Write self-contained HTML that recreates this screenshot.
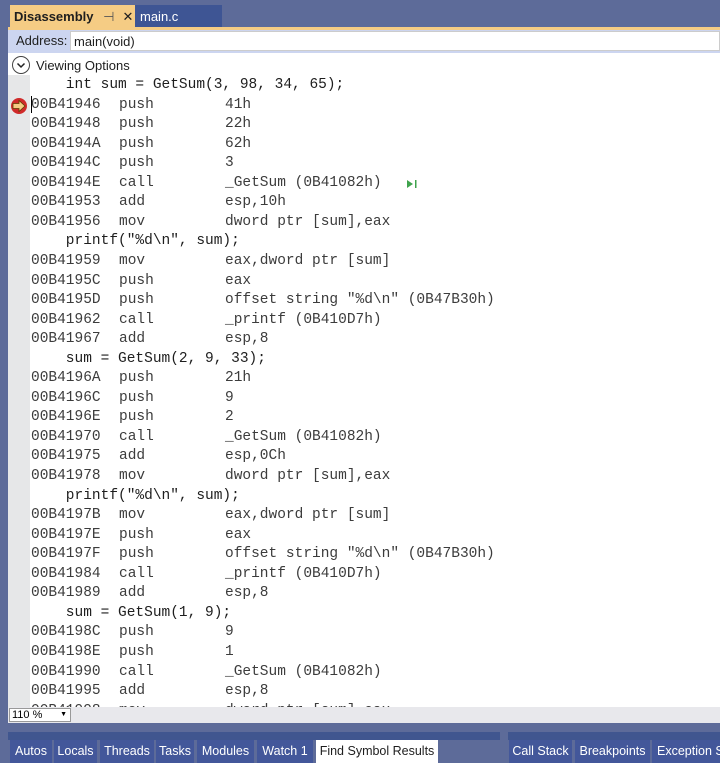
<!DOCTYPE html>
<html><head><meta charset="utf-8"><style>
*{margin:0;padding:0;box-sizing:border-box}
body{width:720px;height:763px;overflow:hidden;background:#5d6b99;font-family:"Liberation Sans",sans-serif;position:relative}
.abs{position:absolute}
.tab1{left:10px;top:5px;width:125px;height:22px;background:#f5cc84;font-weight:bold;font-size:13px;color:#1e1e1e;padding:4px 0 0 4px;white-space:nowrap}
.tab2{left:135px;top:5px;width:87px;height:22px;background:#3e5594;font-size:13px;color:#fff;padding:4px 0 0 5px}
.addrin{left:8px;top:27px;width:712px;height:26px;background:#ccd5f0;border-top:3px solid #f5cc84}
.box{left:70px;top:31px;width:650px;height:20px;background:#fff;border:1px solid #ccc;font-size:13px;padding:2px 0 0 3px;color:#1e1e1e}
.content{left:8px;top:53px;width:712px;height:654px;background:#fff;overflow:hidden}
.gut{left:8px;top:75px;width:22px;height:632px;background:#e6e7e8}
.code{font-family:"Liberation Mono",monospace;font-size:14.5px;color:#3c3c3c;white-space:pre;position:absolute;left:0;height:20px;line-height:20px}
.src{color:#1e1e1e}
.bt{font-size:12.5px;color:#fff;position:absolute;top:740px;height:23px;background:#43579a;padding-top:4px;text-align:center;white-space:nowrap;overflow:hidden}
</style></head><body>
<div class="abs tab1">Disassembly <span style="font-weight:normal;color:#555;margin-left:6px">⊣</span><span style="font-weight:normal;margin-left:8px">✕</span></div>
<div class="abs tab2">main.c</div>
<div class="abs addrin"></div>
<div class="abs" style="left:16px;top:33px;font-size:13px;color:#1e1e1e">Address:</div>
<div class="abs box">main(void)</div>
<div class="abs content"></div>
<div class="abs gut"></div>
<div class="abs" style="left:12px;top:56px;width:18px;height:18px;border:1px solid #444;border-radius:50%"></div>
<svg class="abs" style="left:12px;top:56px" width="18" height="18"><path d="M5.5 7.5l3.5 3.5 3.5-3.5" fill="none" stroke="#222" stroke-width="1.5"/></svg>
<div class="abs" style="left:36px;top:58px;font-size:13px;color:#1e1e1e">Viewing Options</div>
<svg class="abs" style="left:10px;top:97px" width="20" height="18"><circle cx="9" cy="9" r="8" fill="#d02a2a"/><path d="M3 6.5h6v-3l6 5.5-6 5.5v-3H3z" fill="#f5cc84" stroke="#5a4000" stroke-width="0.8"/></svg>
<div class="abs" style="left:31px;top:96px;width:1px;height:17px;background:#000"></div>
<svg class="abs" style="left:406px;top:178px" width="12" height="12"><path d="M1 2l6 4-6 4z" fill="#3fa34d"/><rect x="9" y="2" width="1.5" height="8" fill="#3fa34d"/></svg>
<div id="c" class="abs" style="left:31px;top:75px;width:689px;height:632px;overflow:hidden">
</div>
<div class="abs" style="left:8px;top:707px;width:712px;height:16px;background:#e8e8ec"></div>
<div class="abs" style="left:9px;top:708px;width:62px;height:14px;background:#fff;border:1px solid #999;font-size:11px;padding:0 0 0 2px;line-height:12px">110 %<span style="position:absolute;right:3px;font-size:7px">▼</span></div>
<div class="abs" style="left:8px;top:732px;width:492px;height:8px;background:#40568f"></div>
<div class="abs" style="left:508px;top:732px;width:212px;height:8px;background:#40568f"></div>
<div class="bt" style="left:10px;width:42px">Autos</div>
<div class="bt" style="left:54px;width:43px">Locals</div>
<div class="bt" style="left:100px;width:54px">Threads</div>
<div class="bt" style="left:156px;width:38px">Tasks</div>
<div class="bt" style="left:197px;width:57px">Modules</div>
<div class="bt" style="left:257px;width:56px">Watch 1</div>
<div class="bt" style="left:316px;width:122px;background:#fff;color:#1e1e1e">Find Symbol Results</div>
<div class="bt" style="left:509px;width:63px">Call Stack</div>
<div class="bt" style="left:575px;width:75px">Breakpoints</div>
<div class="bt" style="left:652px;width:80px;text-align:left;padding-left:5px">Exception S</div>
<script>
var L=[
["s","    int sum = GetSum(3, 98, 34, 65);"],
["00B41946","push","41h"],["00B41948","push","22h"],["00B4194A","push","62h"],["00B4194C","push","3"],
["00B4194E","call","_GetSum (0B41082h)"],["00B41953","add","esp,10h"],["00B41956","mov","dword ptr [sum],eax"],
["s",'    printf("%d\\n", sum);'],
["00B41959","mov","eax,dword ptr [sum]"],["00B4195C","push","eax"],["00B4195D","push",'offset string "%d\\n" (0B47B30h)'],
["00B41962","call","_printf (0B410D7h)"],["00B41967","add","esp,8"],
["s","    sum = GetSum(2, 9, 33);"],
["00B4196A","push","21h"],["00B4196C","push","9"],["00B4196E","push","2"],["00B41970","call","_GetSum (0B41082h)"],
["00B41975","add","esp,0Ch"],["00B41978","mov","dword ptr [sum],eax"],
["s",'    printf("%d\\n", sum);'],
["00B4197B","mov","eax,dword ptr [sum]"],["00B4197E","push","eax"],["00B4197F","push",'offset string "%d\\n" (0B47B30h)'],
["00B41984","call","_printf (0B410D7h)"],["00B41989","add","esp,8"],
["s","    sum = GetSum(1, 9);"],
["00B4198C","push","9"],["00B4198E","push","1"],["00B41990","call","_GetSum (0B41082h)"],["00B41995","add","esp,8"],
["00B41998","mov","dword ptr [sum],eax"]];
var c=document.getElementById('c'),h='';
L.forEach(function(l,i){var t=(i*19.55).toFixed(1);
if(l[0]=="s")h+='<div class="code src" style="top:'+t+'px">'+l[1].replace(/&/g,'&amp;').replace(/</g,'&lt;')+'</div>';
else h+='<div class="code" style="top:'+t+'px">'+l[0]+'</div><div class="code" style="top:'+t+'px;left:88px">'+l[1]+'</div><div class="code" style="top:'+t+'px;left:194px">'+l[2]+'</div>';});
c.innerHTML=h;
</script>
</body></html>
